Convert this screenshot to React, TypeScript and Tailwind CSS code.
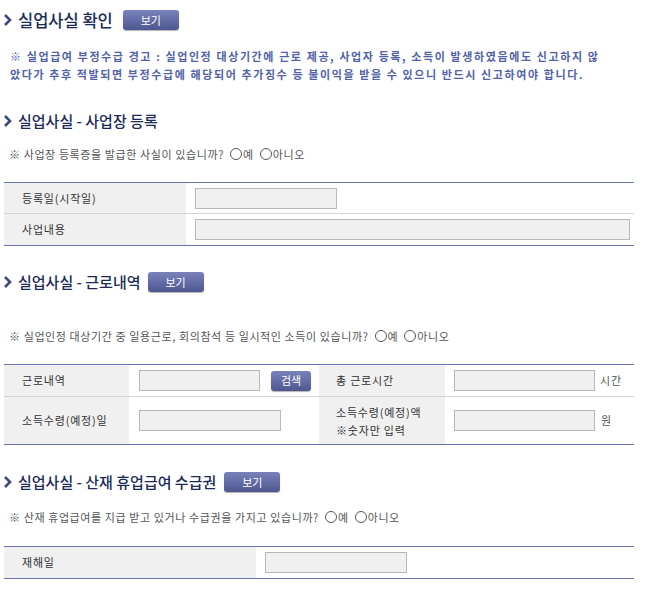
import React from 'react';

const font = { fontFamily: '"Noto Sans CJK KR", "Noto Sans", sans-serif' };

const ViewButton: React.FC<{ label?: string; className?: string }> = ({ label = '보기', className = '' }) => (
  <button
    className={`h-[20px] rounded-[3px] bg-gradient-to-b from-[#7a82ba] to-[#4e5790] text-[11px] leading-none text-white shadow-[0_1px_1px_rgba(0,0,0,0.3)] ${className}`}
  >
    {label}
  </button>
);

const SectionTitle: React.FC<{
  title: string;
  button?: boolean;
  btnClass?: string;
  className?: string;
  textClass?: string;
}> = ({ title, button, btnClass = '', className = '', textClass = 'text-[15px]' }) => (
  <div className={`flex h-[24px] items-center ${className}`}>
    <svg width="8" height="12" viewBox="0 0 8 12" className="mr-[6px]">
      <path d="M1 1 L6 6 L1 11" fill="none" stroke="#3b4a80" strokeWidth="2.6" />
    </svg>
    <span className={`font-medium text-[#1c2a58] ${textClass}`}>{title}</span>
    {button && <ViewButton className={`w-[56px] ${btnClass}`} />}
  </div>
);

const Radio: React.FC<{ label: string }> = ({ label }) => (
  <span className="inline-flex items-center">
    <span className="mr-[1px] inline-block h-[12px] w-[12px] rounded-full border border-[#555] bg-white" />
    <span>{label}</span>
  </span>
);

const Question: React.FC<{ text: string; className?: string }> = ({ text, className = '' }) => (
  <div className={`flex h-[18px] items-center gap-[6px] pl-[5px] text-[11px] tracking-[0.6px] text-[#555] ${className}`}>
    <span>{text}</span>
    <Radio label="예" />
    <Radio label="아니오" />
  </div>
);

const Input: React.FC<{ className?: string }> = ({ className = '' }) => (
  <div className={`h-[21px] border border-[#b8b8b8] bg-[#f0f0f0] ${className}`} />
);

const Label: React.FC<{ className?: string; children: React.ReactNode }> = ({ className = '', children }) => (
  <div className={`flex items-center bg-[#f0f0f0] text-[11px] tracking-[0.8px] text-[#333] ${className}`}>{children}</div>
);

export default function App() {
  return (
    <div style={font} className="w-[648px] bg-white pb-[8px] pl-[4px] pr-[14px] pt-[8px]">
      <SectionTitle title="실업사실 확인" button btnClass="ml-[10px]" textClass="text-[16.5px]" />

      <div className="ml-[6px] mt-[15px] whitespace-nowrap text-[11px] font-bold leading-[18px] tracking-[1.6px] text-[#5262a6]">
        ※ 실업급여 부정수급 경고 : 실업인정 대상기간에 근로 제공, 사업자 등록, 소득이 발생하였음에도 신고하지 않
        <br />
        았다가 추후 적발되면 부정수급에 해당되어 추가징수 등 불이익을 받을 수 있으니 반드시 신고하여야 합니다.
      </div>

      <SectionTitle title="실업사실 - 사업장 등록" className="mt-[26px]" />
      <Question text="※ 사업장 등록증을 발급한 사실이 있습니까?" className="mt-[12px]" />

      <div className="mt-[19px] border-y border-[#6a72b0]">
        <div className="flex h-[31px] border-b border-[#d4d4d4]">
          <Label className="w-[182px] pl-[18px]">등록일(시작일)</Label>
          <div className="flex flex-1 items-center pl-[9px]">
            <Input className="w-[142px]" />
          </div>
        </div>
        <div className="flex h-[31px]">
          <Label className="w-[182px] pl-[18px]">사업내용</Label>
          <div className="flex flex-1 items-center pl-[9px] pr-[4px]">
            <Input className="flex-1" />
          </div>
        </div>
      </div>

      <SectionTitle title="실업사실 - 근로내역" button btnClass="ml-[7px]" className="mt-[24px]" />
      <Question text="※ 실업인정 대상기간 중 일용근로, 회의참석 등 일시적인 소득이 있습니까?" className="mt-[33px]" />

      <div className="mt-[19px] border-y border-[#6a72b0]">
        <div className="flex h-[32px] border-b border-[#d4d4d4]">
          <Label className="w-[125px] pl-[18px]">근로내역</Label>
          <div className="flex w-[190px] items-center pl-[10px]">
            <Input className="w-[121px]" />
            <ViewButton label="검색" className="ml-[11px] w-[40px]" />
          </div>
          <Label className="w-[126px] pl-[17px]">총 근로시간</Label>
          <div className="flex flex-1 items-center pl-[9px] text-[11px] tracking-[0.8px] text-[#555]">
            <Input className="w-[141px]" />
            <span className="ml-[5px]">시간</span>
          </div>
        </div>
        <div className="flex h-[47px]">
          <Label className="w-[125px] pl-[18px]">소득수령(예정)일</Label>
          <div className="flex w-[190px] items-center pl-[10px]">
            <Input className="w-[142px]" />
          </div>
          <Label className="w-[126px] pl-[17px] leading-[18px]">
            <span>
              소득수령(예정)액
              <br />
              ※숫자만 입력
            </span>
          </Label>
          <div className="flex flex-1 items-center pl-[9px] text-[11px] text-[#555]">
            <Input className="w-[141px]" />
            <span className="ml-[6px]">원</span>
          </div>
        </div>
      </div>

      <SectionTitle title="실업사실 - 산재 휴업급여 수급권" button btnClass="ml-[8px]" className="mt-[25px]" />
      <Question text="※ 산재 휴업급여를 지급 받고 있거나 수급권을 가지고 있습니까?" className="mt-[14px]" />

      <div className="mt-[20px] border-y border-[#6a72b0]">
        <div className="flex h-[31px]">
          <Label className="w-[252px] pl-[18px]">재해일</Label>
          <div className="flex flex-1 items-center pl-[9px]">
            <Input className="w-[142px]" />
          </div>
        </div>
      </div>
    </div>
  );
}
